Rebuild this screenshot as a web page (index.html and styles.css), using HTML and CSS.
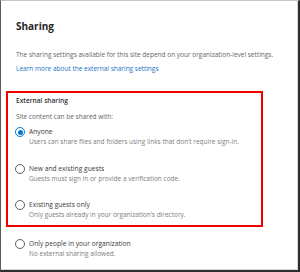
FILE: index.html
```html
<!DOCTYPE html>
<html>
<head>
<meta charset="utf-8">
<link rel="stylesheet" href="styles.css">
</head>
<body>
<div class="panel">
  <h1 class="title">Sharing</h1>
  <p class="text">The sharing settings available for this site depend on your organization-level settings.</p>
  <a class="link" href="#">Learn more about the external sharing settings</a>
  <div class="ext">
    <div class="ext-title">External sharing</div>
    <div class="text sub">Site content can be shared with:</div>
    <div class="opt first">
      <span class="radio checked"></span>
      <span class="label">Anyone</span>
      <span class="desc">Users can share files and folders using links that don’t require sign-in.</span>
    </div>
    <div class="opt">
      <span class="radio"></span>
      <span class="label">New and existing guests</span>
      <span class="desc">Guests must sign in or provide a verification code.</span>
    </div>
    <div class="opt">
      <span class="radio"></span>
      <span class="label">Existing guests only</span>
      <span class="desc">Only guests already in your organization’s directory.</span>
    </div>
  </div>
  <div class="opt outside">
    <span class="radio"></span>
    <span class="label">Only people in your organization</span>
    <span class="desc">No external sharing allowed.</span>
  </div>
</div>
</body>
</html>
```
FILE: styles.css
```css
html, body {
  margin: 0;
  padding: 0;
  background: #fff;
}
.panel {
  box-sizing: border-box;
  width: 300px;
  height: 272px;
  border-top: 1px solid #c4c4c4;
  border-left: 1px solid #5a5a5a;
  border-right: 2px solid #2e2e2e;
  border-bottom: 2px solid #2e2e2e;
  box-shadow: inset -1px -1px 0 #d8d8d8;
  padding: 18px 0 0 5px;
  font-family: "Open Sans", "Noto Sans", sans-serif;
  color: #67645f;
  overflow: hidden;
}
.title {
  margin: 0 0 0 10px;
  font-size: 10px;
  line-height: 14px;
  font-weight: 700;
  color: #252423;
}
.text {
  margin: 17px 0 0 10px;
  font-size: 6.5px;
  line-height: 10px;
  white-space: nowrap;
}
.link {
  display: block;
  margin: 4px 0 0 10px;
  font-size: 6.5px;
  line-height: 10px;
  color: #1a73c8;
  text-decoration: none;
}
.ext {
  width: 257px;
  box-sizing: border-box;
  margin-top: 17px;
  border: 2px solid #f20000;
  padding: 3px 0 4.5px 7px;
}
.ext-title {
  margin-left: 1px;
  font-size: 6.6px;
  line-height: 10px;
  font-weight: 600;
  color: #323130;
}
.sub {
  margin: 6px 0 0 1px;
}
.opt {
  display: grid;
  grid-template-columns: 10px 1fr;
  column-gap: 4px;
  margin-top: 16.5px;
}
.opt.first {
  margin-top: 5px;
}
.opt.outside {
  margin: 12px 0 0 9px;
}
.radio {
  grid-row: 1;
  grid-column: 1;
  align-self: center;
  box-sizing: border-box;
  width: 10px;
  height: 10px;
  border: 1px solid #605e5c;
  border-radius: 50%;
  display: flex;
  align-items: center;
  justify-content: center;
}
.radio.checked {
  border-color: #0078d4;
}
.radio.checked::after {
  content: "";
  width: 5px;
  height: 5px;
  border-radius: 50%;
  background: #0078d4;
}
.label {
  grid-row: 1;
  grid-column: 2;
  font-size: 6.7px;
  line-height: 9px;
  color: #3b3a39;
}
.desc {
  grid-row: 2;
  grid-column: 2;
  font-size: 6.5px;
  line-height: 10px;
  color: #7f7d7a;
  white-space: nowrap;
}
```
